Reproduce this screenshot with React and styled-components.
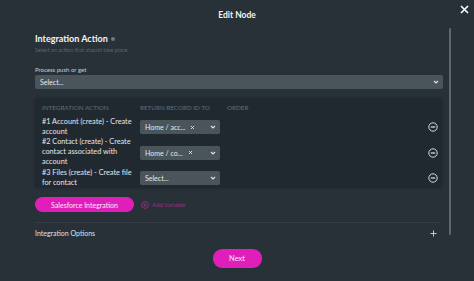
import { Fragment } from "react";
import styled, { createGlobalStyle } from "styled-components";

const Global = createGlobalStyle`
  html, body {
    margin: 0;
    padding: 0;
    background: #293138;
  }
  body {
    font-family: Lato, "Open Sans", sans-serif;
    color: #e6e9eb;
  }
`;

const Modal = styled.div`
  width: 474px;
  height: 281px;
  background: #293138;
  position: relative;
  overflow: hidden;
`;

const Header = styled.div`
  height: 29px;
  display: flex;
  align-items: center;
  justify-content: center;
  font-size: 8.5px;
  font-weight: 700;
  color: #f2f4f5;
`;

const Close = styled.div`
  position: absolute;
  top: 4px;
  right: 5px;
  width: 10px;
  height: 10px;
  display: flex;
  align-items: center;
  justify-content: center;
`;

const Body = styled.div`
  display: flex;
  padding-left: 35px;
  gap: 6px;
`;

const Content = styled.div`
  width: 408px;
  display: flex;
  flex-direction: column;
`;

const Scrollbar = styled.div`
  width: 2px;
  height: 207px;
  margin-top: -1px;
  background: #5f686f;
  border-radius: 1px;
`;

const Title = styled.div`
  display: flex;
  align-items: center;
  gap: 3px;
  font-size: 9px;
  font-weight: 700;
  color: #f2f4f5;
  margin-top: 3px;
  height: 12px;
`;

const Info = styled.span`
  width: 4px;
  height: 4px;
  border-radius: 50%;
  background: #6f787e;
  margin-top: 2px;
`;

const Sub = styled.div`
  font-size: 5.5px;
  color: #5a656d;
  margin-top: 3px;
`;

const Label = styled.div`
  font-size: 6px;
  color: #c9ced2;
  margin-top: 13px;
`;

const Select = styled.div`
  height: 14px;
  background: #4a545b;
  border-radius: 2px;
  display: flex;
  align-items: center;
  justify-content: space-between;
  padding: 0 4px 0 5px;
  font-size: ${(p) => p.$fs || "7px"};
  color: #e6e9eb;
  width: ${(p) => p.$w || "auto"};
  box-sizing: border-box;
  margin-top: ${(p) => p.$mt || "0"};
  white-space: nowrap;
`;

const SelectLeft = styled.div`
  display: flex;
  align-items: center;
  gap: 5px;
`;

const Panel = styled.div`
  margin-top: 9px;
  background: #212930;
  border-radius: 3px;
  padding: 4px 4px 0 7px;
  height: 90px;
  width: 407px;
  box-sizing: border-box;
  box-shadow: 0 0 3px rgba(0, 0, 0, 0.25);
`;

const Grid = styled.div`
  display: grid;
  grid-template-columns: 98px 87px 1fr 10px;
  align-items: center;
`;

const Head = styled.div`
  font-size: 6.3px;
  color: #646e75;
  height: 10px;
  margin-bottom: 5px;
  display: flex;
  align-items: center;
  white-space: nowrap;
`;

const Action = styled.div`
  font-size: 7.3px;
  line-height: 10px;
  color: #e4e7e9;
  white-space: nowrap;
  margin-bottom: ${(p) => p.$mb || "0"};
`;

const Remove = styled.div`
  display: flex;
  justify-content: center;
`;

const Buttons = styled.div`
  display: flex;
  align-items: center;
  gap: 7px;
  margin-top: 9px;
`;

const Pill = styled.button`
  border: none;
  background: #e01fba;
  color: #fbe9f7;
  font-family: Lato, sans-serif;
  font-size: ${(p) => p.$fs || "7px"};
  height: ${(p) => p.$h || "15px"};
  border-radius: 9px;
  padding: 0;
  width: ${(p) => p.$w};
  display: flex;
  align-items: center;
  justify-content: center;
`;

const AddVar = styled.div`
  display: flex;
  align-items: center;
  gap: 3px;
  font-size: 6px;
  color: #9a2c86;
`;

const Options = styled.div`
  margin-top: 10px;
  border-top: 1px solid #353e45;
  width: 405px;
  height: 21px;
  display: flex;
  align-items: center;
  justify-content: space-between;
  font-size: 7px;
  color: #dfe3e6;
  padding-right: 3px;
  box-sizing: border-box;
`;

const Footer = styled.div`
  display: flex;
  justify-content: center;
  margin-top: 6px;
`;

const Chevron = () => (
  <svg width="6" height="4" viewBox="0 0 6 4">
    <path d="M1 1l2 2 2-2" stroke="#dfe3e6" strokeWidth="1.1" fill="none" />
  </svg>
);

const Times = () => (
  <svg width="5" height="5" viewBox="0 0 5 5">
    <path d="M1 1l3 3M4 1L1 4" stroke="#dfe3e6" strokeWidth="0.9" />
  </svg>
);

const MinusCircle = () => (
  <svg width="10" height="10" viewBox="0 0 10 10">
    <circle cx="5" cy="5" r="4.2" stroke="#d5dadd" strokeWidth="1" fill="none" />
    <path d="M2.8 5h4.4" stroke="#d5dadd" strokeWidth="1.3" />
  </svg>
);

const rows = [
  { text: ["#1 Account (create) - Create", "account"], value: "Home / acc..." },
  { text: ["#2 Contact (create) - Create", "contact associated with", "account"], value: "Home / co..." },
  { text: ["#3 Files (create) - Create file", "for contact"], value: null },
];

export default function App() {
  return (
    <Modal>
      <Global />
      <Header>Edit Node</Header>
      <Close>
        <svg width="9" height="9" viewBox="0 0 9 9">
          <path d="M1 1l7 7M8 1L1 8" stroke="#ffffff" strokeWidth="1.6" />
        </svg>
      </Close>
      <Body>
        <Content>
          <Title>
            Integration Action <Info />
          </Title>
          <Sub>Select an action that should take place</Sub>
          <Label>Process push or get</Label>
          <Select $mt="2px">
            <span>Select...</span>
            <Chevron />
          </Select>
          <Panel>
            <Grid>
              <Head>INTEGRATION ACTION</Head>
              <Head>RETURN RECORD ID TO</Head>
              <Head>ORDER</Head>
              <Head />
              {rows.map((r, i) => (
                <Fragment key={r.text[0]}>
                  <Action $mb={i === 1 ? "1px" : "0"}>
                    {r.text.map((t) => (
                      <div key={t}>{t}</div>
                    ))}
                  </Action>
                  <Select $w="80px" $fs="7px">
                    <SelectLeft>
                      <span>{r.value || "Select..."}</span>
                      {r.value && <Times />}
                    </SelectLeft>
                    <Chevron />
                  </Select>
                  <div />
                  <Remove>
                    <MinusCircle />
                  </Remove>
                </Fragment>
              ))}
            </Grid>
          </Panel>
          <Buttons>
            <Pill $w="99px">Salesforce Integration</Pill>
            <AddVar>
              <svg width="8" height="8" viewBox="0 0 8 8">
                <circle cx="4" cy="4" r="3.4" stroke="#9a2c86" strokeWidth="0.9" fill="none" />
                <path d="M4 2.2v3.6M2.2 4h3.6" stroke="#9a2c86" strokeWidth="0.9" />
              </svg>
              Add Variable
            </AddVar>
          </Buttons>
          <Options>
            <span>Integration Options</span>
            <svg width="7" height="7" viewBox="0 0 7 7">
              <path d="M3.5 0.5v6M0.5 3.5h6" stroke="#d5dadd" strokeWidth="0.9" />
            </svg>
          </Options>
        </Content>
        <Scrollbar />
      </Body>
      <Footer>
        <Pill $w="49px" $h="19px" $fs="7.5px">
          Next
        </Pill>
      </Footer>
    </Modal>
  );
}
